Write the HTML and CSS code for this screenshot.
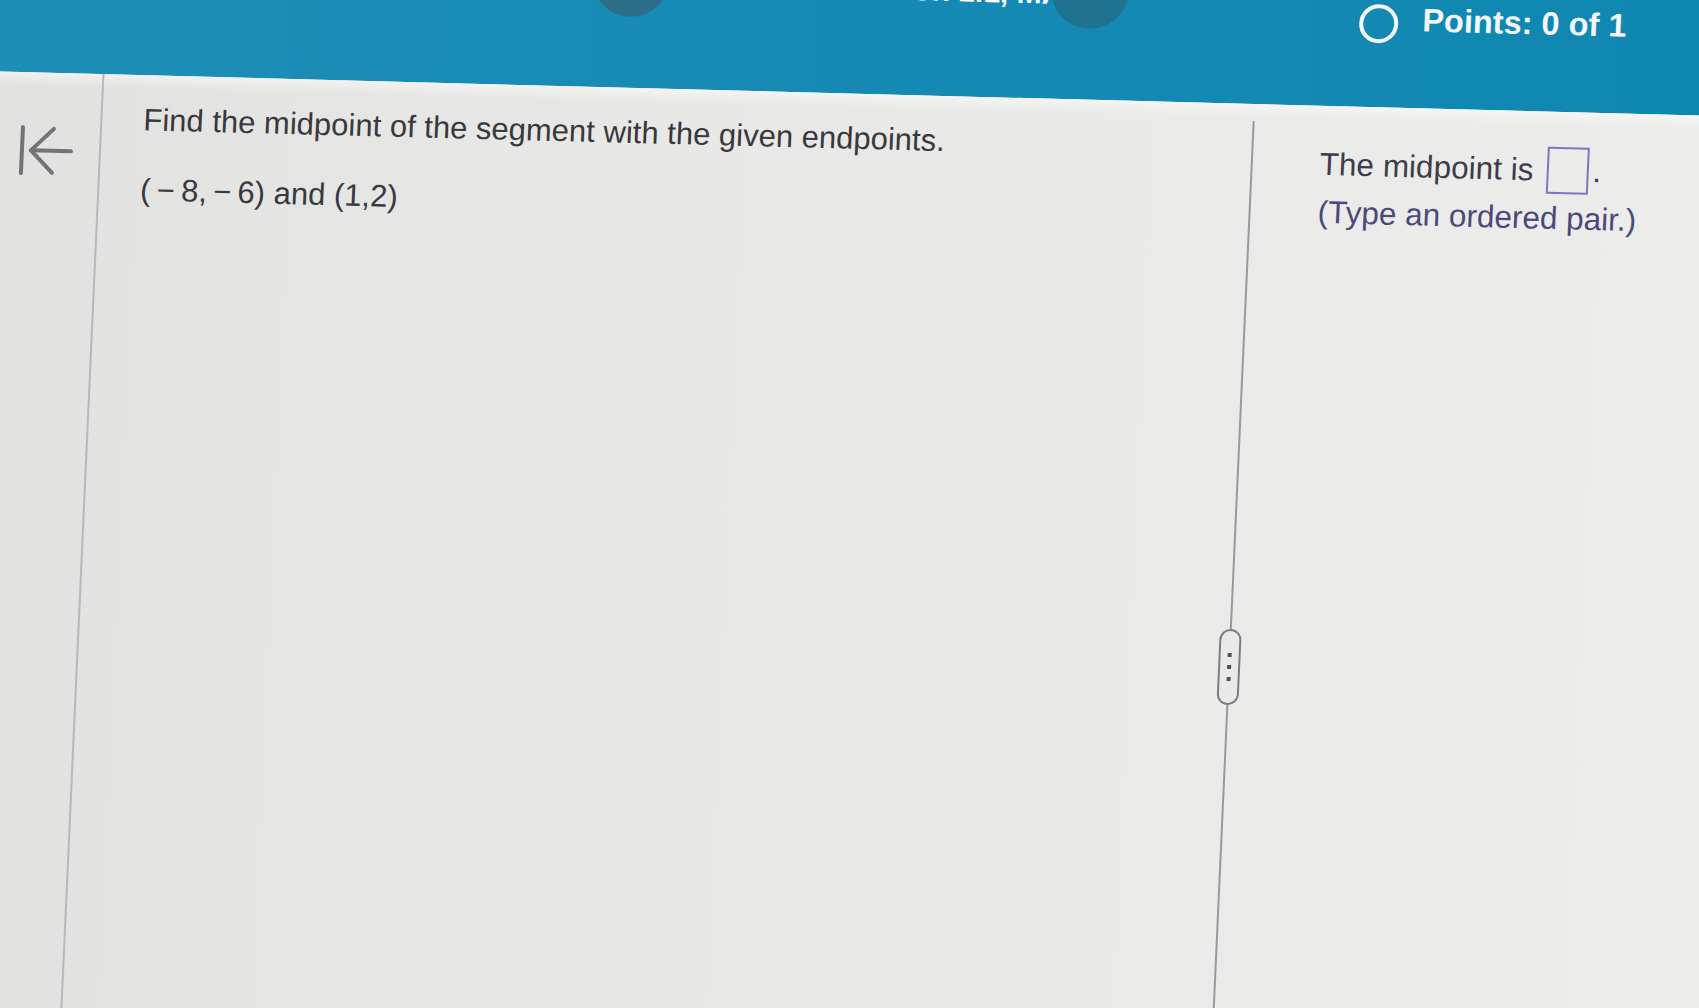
FILE: index.html
```html
<!DOCTYPE html>
<html lang="en">
<head>
<meta charset="utf-8">
<title>Midpoint question</title>
<link rel="stylesheet" href="styles.css">
</head>
<body>
<div class="screen">
  <header class="topbar">
    <span class="avatar avatar-a"></span>
    <div class="title">Homework: Section 1.1, MA155</div>
    <span class="avatar avatar-b"></span>
    <div class="points">
      <span class="ring"></span>
      <span class="points-text">Points: 0 of 1</span>
    </div>
  </header>
  <main class="workspace">
    <nav class="rail">
      <svg class="back-icon" width="60" height="50" viewBox="0 0 60 50" aria-label="Back">
        <g fill="none" stroke="#737377" stroke-width="4" stroke-linecap="round" stroke-linejoin="round">
          <path d="M5 2V48"/>
          <path d="M14 25H54"/>
          <path d="M36 3L14 25L36 47"/>
        </g>
      </svg>
    </nav>
    <section class="question">
      <p class="prompt">Find the midpoint of the segment with the given endpoints.</p>
      <p class="given">(&thinsp;&minus;&thinsp;8,&thinsp;&minus;&thinsp;6) and (1,2)</p>
    </section>
    <div class="splitter">
      <span class="splitter-line splitter-top"></span>
      <span class="handle"><i></i><i></i><i></i></span>
      <span class="splitter-line splitter-rest"></span>
    </div>
    <section class="answer">
      <p class="answer-line">The midpoint is<span class="answer-box"></span>.</p>
      <p class="hint">(Type an ordered pair.)</p>
    </section>
  </main>
</div>
</body>
</html>
```
FILE: styles.css
```css
* { box-sizing: border-box; }

html, body {
  margin: 0;
  padding: 0;
  width: 1699px;
  height: 1008px;
  overflow: hidden;
}

body {
  background: #e6e6e4;
  font-family: "Liberation Sans", Arial, sans-serif;
}

.screen {
  width: 1759px;
  height: 1088px;
  margin: -40px 0 0 -30px;
  display: flex;
  flex-direction: column;
  transform-origin: 50% 50%;
  transform: matrix(1, 0.026, -0.045, 1, 0, 0);
}

/* ---------- top bar ---------- */
.topbar {
  flex: none;
  height: 134px;
  display: flex;
  align-items: flex-start;
  overflow: hidden;
  background: linear-gradient(90deg, #1d8eb8 0%, #168ab5 45%, #0f87b1 100%);
}

.avatar {
  flex: none;
  width: 78px;
  height: 78px;
  margin-top: -15px;
  border-radius: 50%;
  background: #23718c;
}

.avatar-a {
  margin-left: 599px;
  background: #2a6f87;
}

.avatar-b {
  background: #1f7391;
}

.title {
  flex: none;
  width: 381px;
  margin-top: 12px;
  padding-right: 42px;
  color: #ffffff;
  font-size: 30px;
  font-weight: bold;
  line-height: 34px;
  white-space: nowrap;
  overflow: hidden;
  text-align: right;
}

.points {
  flex: none;
  display: flex;
  align-items: flex-start;
  margin-left: 231px;
  margin-top: 31px;
}

.ring {
  flex: none;
  width: 39px;
  height: 39px;
  border: 4px solid #f4f6f7;
  border-radius: 50%;
}

.points-text {
  margin-left: 24px;
  margin-top: -4px;
  color: #f4f6f7;
  font-size: 32.5px;
  font-weight: bold;
  line-height: 39px;
  white-space: nowrap;
}

/* ---------- workspace ---------- */
.workspace {
  flex: 1;
  display: flex;
  background:
    linear-gradient(180deg, rgba(255,255,255,0.5) 0px, rgba(255,255,255,0) 14px),
    linear-gradient(90deg, #e1e1df 0%, #e7e7e5 30%, #eaeae8 70%, #ececea 100%);
}

.rail {
  flex: none;
  width: 116px;
  padding: 53px 0 0 32px;
  border-right: 2px solid #b6b8be;
}

.back-icon {
  display: block;
}

.question {
  flex: none;
  width: 1138px;
  padding: 25px 0 0 41px;
  color: #38383d;
  font-size: 31px;
  line-height: 40px;
}

.question p {
  margin: 0;
  white-space: nowrap;
}

.question .given {
  margin-top: 30px;
}

.splitter {
  flex: none;
  width: 24px;
  padding-top: 17px;
  display: flex;
  flex-direction: column;
  align-items: center;
}

.splitter-line {
  display: block;
  width: 2px;
  background: #97999e;
}

.splitter-top {
  height: 508px;
}

.splitter-rest {
  flex: 1;
}

.handle {
  flex: none;
  width: 22px;
  height: 76px;
  border: 2px solid #7b7d82;
  border-radius: 12px;
  background: #e9e9e7;
  display: flex;
  flex-direction: column;
  align-items: center;
  justify-content: center;
  gap: 8px;
}

.handle i {
  display: block;
  width: 4px;
  height: 4px;
  background: #505056;
}

.answer {
  flex: 1;
  padding: 34px 0 0 56px;
  font-size: 31.5px;
  line-height: 48px;
}

.answer p {
  margin: 0;
  white-space: nowrap;
}

.answer-line {
  color: #3e3c48;
}

.answer-box {
  display: inline-block;
  width: 42px;
  height: 47px;
  margin: 0 4px 0 13px;
  border: 2px solid #7b78c2;
  vertical-align: -13px;
}

.hint {
  margin-top: 6px;
  color: #4b4979;
}
```
